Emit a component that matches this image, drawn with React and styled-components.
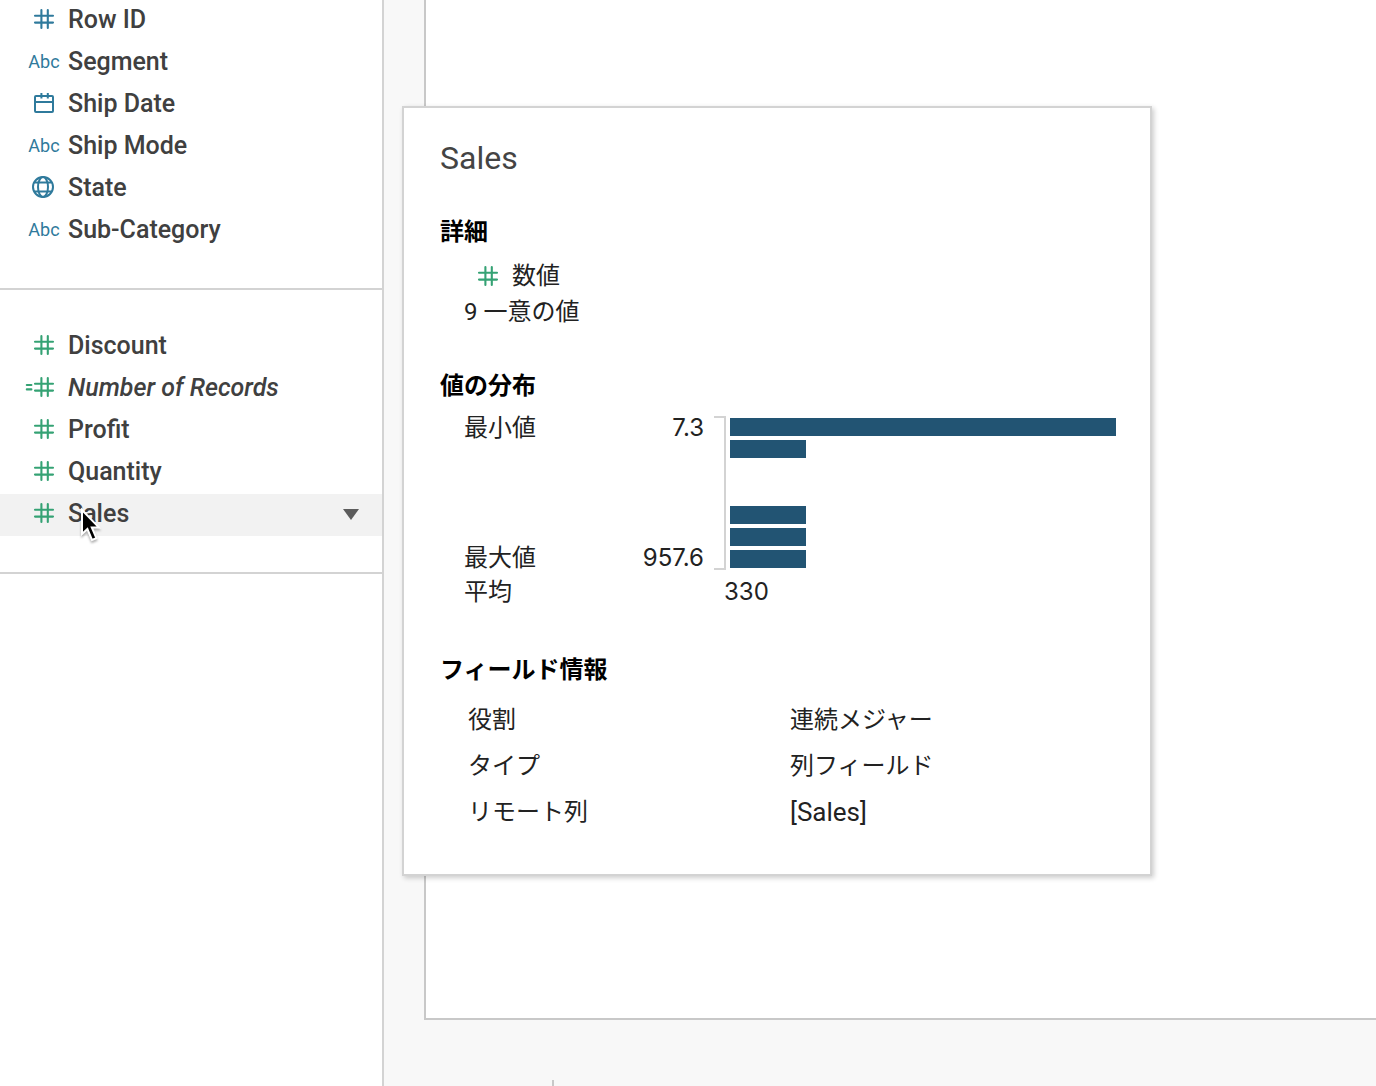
import styled, { createGlobalStyle } from 'styled-components';

const fonts = {
    label: "Roboto, 'Noto Sans CJK JP', sans-serif",
    number: "Inter, 'Noto Sans CJK JP', sans-serif",
};

const colors = {
    dimension: '#2f7a9c',
    measure: '#35a274',
    line: '#d3d3d3',
    sheetLine: '#c8c8c8',
    bar: '#225473',
};

const GlobalStyle = createGlobalStyle`
    * {
        box-sizing: border-box;
    }

    body {
        margin: 0;
        background-color: #fff;
        font-family: ${fonts.label};
        font-size: 24px;
        color: #222;
    }

    button {
        font: inherit;
        color: inherit;
        background: none;
        border: 0;
        padding: 0;
    }
`;

const Page = styled.div`
    position: relative;
    display: flex;
    min-height: 100vh;
`;

const Sidebar = styled.aside`
    flex: 0 0 384px;
    border-right: 2px solid ${colors.line};
`;

const FieldList = styled.ul`
    list-style: none;
    margin: 0;
    padding: ${(props) => (props.$first ? '0 0 36px' : '36px 0')};
    border-bottom: 2px solid ${colors.line};
`;

const FieldRow = styled.li`
    display: flex;
    align-items: center;
    height: 42px;
    background-color: ${(props) => (props.$active ? '#f2f2f2' : 'transparent')};
`;

const FieldButton = styled.button`
    flex: 1;
    display: flex;
    align-items: center;
    height: 42px;
    padding: 0 0 4px 22px;
    text-align: left;
    font-size: 25px;
    font-weight: 500;
    font-style: ${(props) => (props.$italic ? 'italic' : 'normal')};
    color: #404040;
`;

const IconSlot = styled.span`
    display: flex;
    justify-content: center;
    width: 44px;
    margin-right: 2px;
    font-size: 18px;
    font-weight: 400;
    color: ${(props) => props.$color};
`;

const MenuButton = styled.button`
    display: flex;
    padding: 0 22px;
`;

const Canvas = styled.main`
    flex: 1;
    display: flex;
    flex-direction: column;
    padding-left: 40px;
    background-color: #f8f8f8;
`;

const Sheet = styled.div`
    flex: 1;
    background-color: #fff;
    border: solid ${colors.sheetLine};
    border-width: 0 0 2px 2px;
`;

const TabStrip = styled.div`
    display: flex;
    align-items: flex-end;
    height: 66px;
    padding-left: 128px;
`;

const TabEdge = styled.span`
    width: 2px;
    height: 6px;
    background-color: ${colors.sheetLine};
`;

const Tooltip = styled.section`
    position: absolute;
    top: 106px;
    left: 402px;
    width: 750px;
    padding: 32px 34px 40px 36px;
    background-color: #fff;
    border: 2px solid ${colors.line};
    box-shadow: 2px 2px 5px rgba(0, 0, 0, 0.2);
    line-height: 36px;
`;

const Title = styled.h1`
    margin: 0 0 38px;
    font-size: 32px;
    font-weight: 400;
    color: #444;
`;

const Heading = styled.h2`
    margin: 0;
    font-size: 24px;
    font-weight: 700;
    color: #000;
`;

const Details = styled.div`
    padding: 8px 0 38px 24px;
`;

const DetailRow = styled.div`
    display: flex;
    align-items: center;
    padding-left: ${(props) => (props.$withIcon ? '2px' : '0')};
`;

const Distribution = styled.div`
    display: flex;
    padding: 12px 0 4px 24px;
    line-height: 24px;
`;

const RangeLabels = styled.div`
    display: flex;
    flex-direction: column;
    justify-content: space-between;
    flex: 0 0 240px;
`;

const RangeRow = styled.div`
    display: flex;
    justify-content: space-between;
`;

const Value = styled.span`
    font-family: ${fonts.number};
`;

const Bracket = styled.div`
    width: 12px;
    margin: 0 4px 0 10px;
    border: 2px solid ${colors.line};
    border-left: 0;
`;

const Bars = styled.div`
    flex: 1;
    display: flex;
    flex-direction: column;
    gap: 4px;
    padding: 2px 0;
`;

const Bar = styled.div`
    height: 18px;
    background-color: ${colors.bar};
`;

const Average = styled.div`
    display: flex;
    padding: 0 0 42px 24px;
`;

const AverageLabel = styled.span`
    flex: 0 0 260px;
`;

const InfoTable = styled.table`
    width: 100%;
    margin-top: 8px;
    border-collapse: collapse;
    table-layout: fixed;

    th,
    td {
        height: 46px;
        padding: 2px 0 0;
        text-align: left;
        font-weight: 400;
    }

    th {
        width: 350px;
        padding-left: 28px;
    }
`;

const RemoteName = styled.span`
    font-size: 26px;
`;

const Pointer = styled.svg`
    position: absolute;
    top: 504px;
    left: 76px;
    filter: drop-shadow(0 2px 1px rgba(0, 0, 0, 0.3));
`;

const NumberIcon = ({ calculated }) => (
    <svg width='44' height='24' fill='none' stroke='currentColor' strokeWidth='2.1' strokeLinecap='round'>
        <path d='M19.4 3v18M25.8 3v18M13 8.8h18M13 15.6h18' />
        {calculated && <path d='M4.8 10h4.6M4.8 14.4h4.6' />}
    </svg>
);

const DateIcon = () => (
    <svg width='44' height='24' fill='none' stroke='currentColor' strokeWidth='2'>
        <rect x='13' y='5' width='18' height='16' rx='1' />
        <path d='M13 11h18M19.4 2v5.5M25.8 2v5.5' />
    </svg>
);

const GeoIcon = () => (
    <svg width='44' height='24' fill='none' stroke='currentColor' strokeWidth='2'>
        <circle cx='21' cy='12' r='10' />
        <ellipse cx='21' cy='12' rx='5' ry='10' />
        <path d='M12.5 7.6h17M12.5 16.4h17' />
    </svg>
);

const icons = {
    number: <NumberIcon />,
    calculated: <NumberIcon calculated />,
    date: <DateIcon />,
    geo: <GeoIcon />,
    text: 'Abc',
};

const dimensions = [
    { name: 'Row ID', type: 'number' },
    { name: 'Segment', type: 'text' },
    { name: 'Ship Date', type: 'date' },
    { name: 'Ship Mode', type: 'text' },
    { name: 'State', type: 'geo' },
    { name: 'Sub-Category', type: 'text' },
];

const measures = [
    { name: 'Discount', type: 'number' },
    { name: 'Number of Records', type: 'calculated' },
    { name: 'Profit', type: 'number' },
    { name: 'Quantity', type: 'number' },
    { name: 'Sales', type: 'number', active: true },
];

// share of the widest bar, in percent
const bins = [100, 19.7, 0, 0, 19.7, 19.7, 19.7];

const info = [
    ['役割', '連続メジャー'],
    ['タイプ', '列フィールド'],
    ['リモート列', <RemoteName>[Sales]</RemoteName>],
];

const Field = ({ field, color }) => (
    <FieldRow $active={field.active}>
        <FieldButton type='button' $italic={field.type === 'calculated'}>
            <IconSlot $color={color}>{icons[field.type]}</IconSlot>
            {field.name}
        </FieldButton>
        {field.active && (
            <MenuButton type='button' aria-label='Sales menu'>
                <svg width='18' height='12'>
                    <path d='M1 0h16L9 11z' fill='#5c5c5c' />
                </svg>
            </MenuButton>
        )}
    </FieldRow>
);

const App = () => (
    <Page>
        <GlobalStyle />
        <Sidebar>
            <FieldList $first>
                {dimensions.map((field) => (
                    <Field key={field.name} field={field} color={colors.dimension} />
                ))}
            </FieldList>
            <FieldList>
                {measures.map((field) => (
                    <Field key={field.name} field={field} color={colors.measure} />
                ))}
            </FieldList>
        </Sidebar>

        <Canvas>
            <Sheet />
            <TabStrip>
                <TabEdge />
            </TabStrip>
        </Canvas>

        <Tooltip>
            <Title>Sales</Title>

            <Heading>詳細</Heading>
            <Details>
                <DetailRow $withIcon>
                    <IconSlot $color={colors.measure}>
                        <NumberIcon />
                    </IconSlot>
                    数値
                </DetailRow>
                <DetailRow>9 一意の値</DetailRow>
            </Details>

            <Heading>値の分布</Heading>
            <Distribution>
                <RangeLabels>
                    <RangeRow>
                        最小値 <Value>7.3</Value>
                    </RangeRow>
                    <RangeRow>
                        最大値 <Value>957.6</Value>
                    </RangeRow>
                </RangeLabels>
                <Bracket />
                <Bars>
                    {bins.map((share, index) => (
                        <Bar key={index} style={{ width: `${share}%` }} />
                    ))}
                </Bars>
            </Distribution>
            <Average>
                <AverageLabel>平均</AverageLabel>
                <Value>330</Value>
            </Average>

            <Heading>フィールド情報</Heading>
            <InfoTable>
                <tbody>
                    {info.map(([label, value]) => (
                        <tr key={label}>
                            <th scope='row'>{label}</th>
                            <td>{value}</td>
                        </tr>
                    ))}
                </tbody>
            </InfoTable>
        </Tooltip>

        <Pointer width='28' height='42'>
            <path
                d='M6 6v24l5.4-5 4.6 11 4.4-1.8-4.6-10.8h7z'
                fill='#000'
                stroke='#fff'
                strokeWidth='2'
            />
        </Pointer>
    </Page>
);

export default App;
